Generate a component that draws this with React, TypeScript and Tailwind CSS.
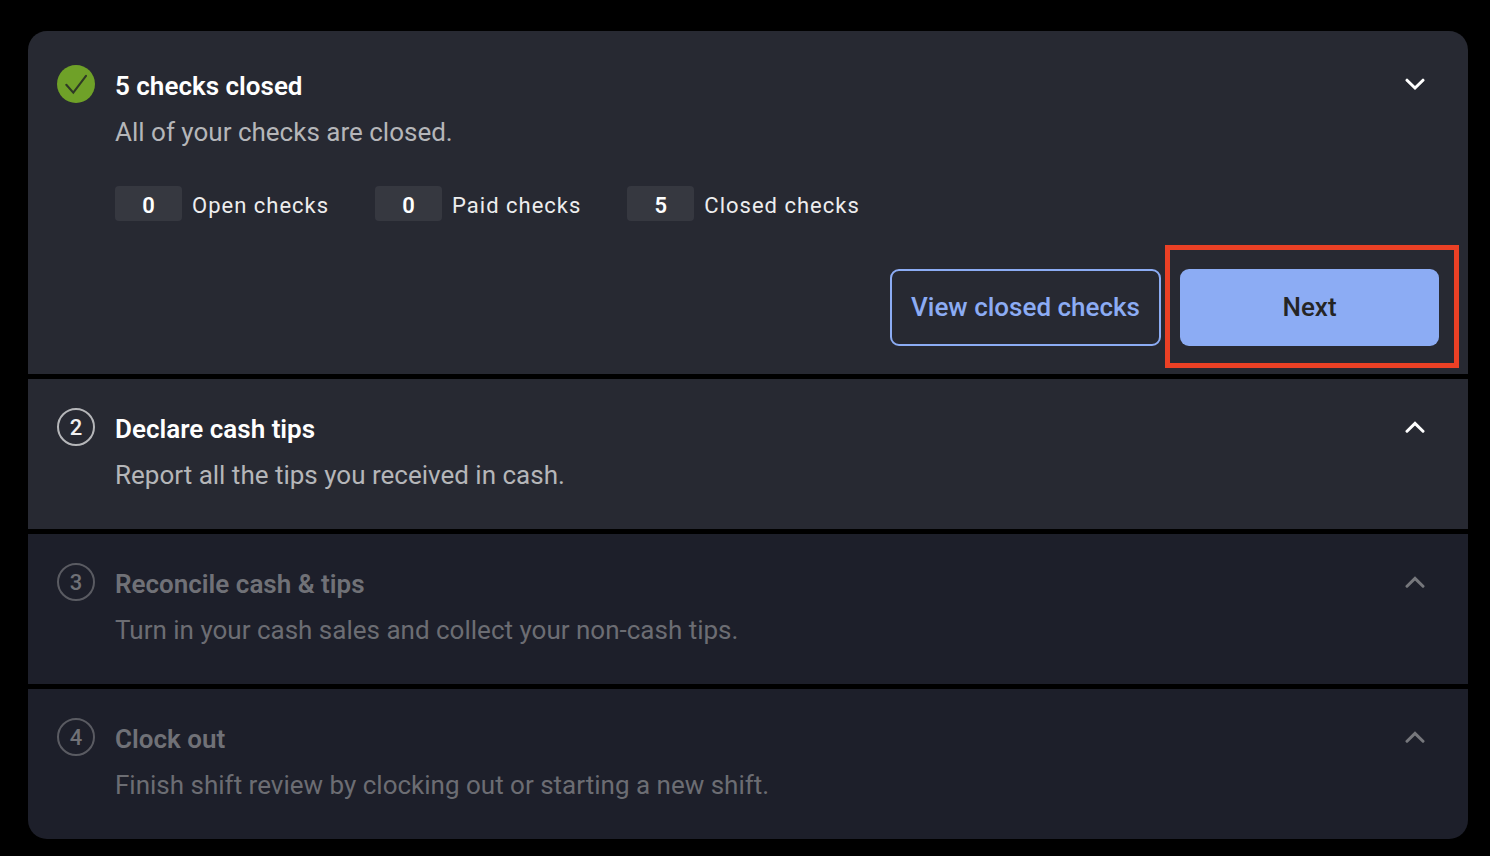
import React, { useState } from 'react';
import clsx from 'clsx';

interface Step {
  id: number;
  title: string;
  description: string;
  done?: boolean;
  locked?: boolean;
}

const STEPS: Step[] = [
  { id: 1, title: '5 checks closed', description: 'All of your checks are closed.', done: true },
  { id: 2, title: 'Declare cash tips', description: 'Report all the tips you received in cash.' },
  {
    id: 3,
    title: 'Reconcile cash & tips',
    description: 'Turn in your cash sales and collect your non-cash tips.',
    locked: true,
  },
  {
    id: 4,
    title: 'Clock out',
    description: 'Finish shift review by clocking out or starting a new shift.',
    locked: true,
  },
];

const COUNTS = [
  { label: 'Open checks', value: 0 },
  { label: 'Paid checks', value: 0 },
  { label: 'Closed checks', value: 5 },
];

const StepBadge: React.FC<{ step: Step }> = ({ step }) => {
  if (step.done) {
    return (
      <svg viewBox="0 0 38 38" className="size-[38px] shrink-0" aria-label="Done">
        <circle cx="19" cy="19" r="19" fill="#6fa128" />
        <path
          d="M9.3 19.8 L16.3 27.6 L29 10.8"
          fill="none"
          stroke="#2f3a25"
          strokeWidth="2.1"
          strokeLinecap="round"
        />
      </svg>
    );
  }

  return (
    <span
      className={clsx(
        'flex size-[38px] shrink-0 items-center justify-center rounded-full border-2 pt-px text-[22px] leading-none font-medium',
        step.locked ? 'border-[#5a5b62] text-[#707177]' : 'border-[#b5b6b9] text-[#f0f0f1]'
      )}
    >
      {step.id}
    </span>
  );
};

const Chevron: React.FC<{ down: boolean }> = ({ down }) => (
  <svg viewBox="0 0 20 14" className="h-[14px] w-5" fill="none" stroke="currentColor" strokeWidth="3">
    <path d={down ? 'M2 3.2 L10 11 L18 3.2' : 'M2 11.2 L10 3.4 L18 11.2'} strokeLinecap="round" />
  </svg>
);

const CheckSummary: React.FC<{ onNext: () => void }> = ({ onNext }) => (
  <>
    <div className="mt-[35px] flex flex-wrap gap-[46px] pl-[58px]">
      {COUNTS.map((count) => (
        <div key={count.label} className="flex items-center gap-[10px]">
          <span className="flex h-[35px] w-[67px] items-center justify-center rounded bg-[#363840] pt-1 text-[22px] font-semibold text-white">
            {count.value}
          </span>
          <span className="pt-1 text-[22px] leading-[31px] tracking-[1px] text-[#ededee]">{count.label}</span>
        </div>
      ))}
    </div>

    <div className="mt-12 flex justify-end gap-[19px] text-[26px] font-medium">
      <button
        type="button"
        className="h-[77px] min-w-[271px] rounded-[9px] border-2 border-[#8cacf4] px-4 text-[#8cacf4]"
      >
        View closed checks
      </button>
      <div className="relative">
        <button
          type="button"
          onClick={onNext}
          className="h-[77px] w-[259px] rounded-[9px] bg-[#8cacf4] text-[#252525]"
        >
          Next
        </button>
        <div className="pointer-events-none absolute -top-6 -right-5 -bottom-[22px] -left-[15px] border-5 border-[#eb4025]" />
      </div>
    </div>
  </>
);

export default function App() {
  const [openId, setOpenId] = useState<number | null>(1);

  return (
    <div className="min-h-screen bg-black pt-[31px] pr-[22px] pb-[17px] pl-7 font-[Roboto,sans-serif]">
      <main className="flex flex-col gap-[5px] overflow-hidden rounded-[19px]">
        {STEPS.map((step) => {
          const open = openId === step.id;
          return (
            <section
              key={step.id}
              className={clsx(
                'px-[29px] pt-[29px] first:pt-[34px]',
                step.locked ? 'bg-[#1d1f2a]' : 'bg-[#272932]',
                open && step.done ? 'pb-7' : 'pb-[35px]'
              )}
            >
              <div className="flex items-start gap-5">
                <StepBadge step={step} />
                <div className="flex-1 text-[26px]">
                  <h2
                    className={clsx(
                      'leading-[42px] font-semibold',
                      step.locked ? 'text-[#707177]' : 'text-white'
                    )}
                  >
                    {step.title}
                  </h2>
                  <p className={clsx('mt-[6px] leading-[38px]', step.locked ? 'text-[#6c6d73]' : 'text-[#b5b6b9]')}>
                    {step.description}
                  </p>
                </div>
                <button
                  type="button"
                  disabled={step.locked}
                  aria-expanded={open}
                  aria-label={`Toggle ${step.title}`}
                  onClick={() => setOpenId(open ? null : step.id)}
                  className={clsx(
                    'flex h-[38px] w-12 items-center justify-center',
                    step.locked ? 'text-[#76777c]' : 'text-white'
                  )}
                >
                  <Chevron down={open} />
                </button>
              </div>
              {open && step.done && <CheckSummary onNext={() => setOpenId(step.id + 1)} />}
            </section>
          );
        })}
      </main>
    </div>
  );
}
